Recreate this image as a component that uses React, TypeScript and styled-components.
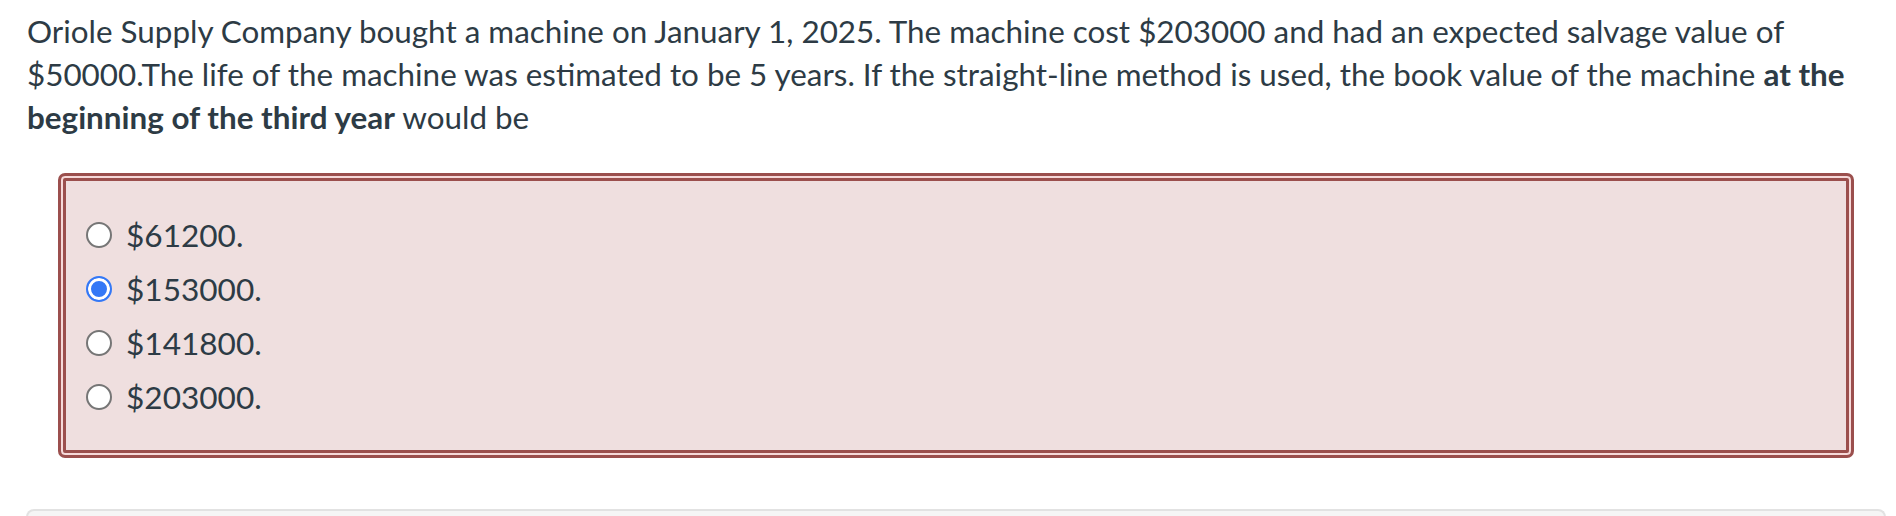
import React from "react";
import styled, { createGlobalStyle } from "styled-components";

const Global = createGlobalStyle`
  html, body { margin: 0; padding: 0; background: #ffffff; }
  body { font-family: Lato, "Noto Sans", sans-serif; color: #2d3b45; }
`;

const Page = styled.div`
  padding: 10px 10px 0 26px;
`;

const Question = styled.p`
  margin: 0;
  font-size: 31.4px;
  line-height: 43px;
  color: #2d3b45;
  padding-left: 1px;
  b { font-weight: 700; }
`;

const AnswerBox = styled.div`
  margin: 34px 32px 0 32px;
  background: #efdfdf;
  border: 3px solid #9b4f4d;
  border-radius: 7px;
  box-shadow: inset 0 0 0 2px #f6d9d9, inset 0 0 0 5px #9b4f4d;
  padding: 32px 32px 31px 25px;
`;

const Option = styled.label`
  display: flex;
  align-items: center;
  height: 54px;
  gap: 14px;
  font-size: 31.6px;
  color: #2d3b45;
`;

const Radio = styled.span<{ $checked?: boolean }>`
  box-sizing: border-box;
  width: 26px;
  height: 26px;
  border-radius: 50%;
  flex: none;
  background: ${(p) => (p.$checked ? "#3478f6" : "#ffffff")};
  border: ${(p) => (p.$checked ? "2px solid #3478f6" : "2px solid #767676")};
  box-shadow: ${(p) => (p.$checked ? "inset 0 0 0 3px #ffffff" : "none")};
`;

const Next = styled.div`
  margin-top: 51px;
  height: 40px;
  border: 2px solid #e2e2e2;
  border-bottom: none;
  border-radius: 8px 8px 0 0;
  background: #f5f5f5;
`;

const options = [
  { label: "$61200.", checked: false },
  { label: "$153000.", checked: true },
  { label: "$141800.", checked: false },
  { label: "$203000.", checked: false },
];

export default function App() {
  return (
    <Page>
      <Global />
      <Question>
        Oriole Supply Company bought a machine on January 1, 2025. The machine cost $203000 and had an expected salvage value of
        $50000.The life of the machine was estimated to be 5 years. If the straight-line method is used, the book value of the machine{" "}
        <b>at the beginning of the third year</b> would be
      </Question>
      <AnswerBox>
        {options.map((o) => (
          <Option key={o.label}>
            <Radio $checked={o.checked} />
            {o.label}
          </Option>
        ))}
      </AnswerBox>
      <Next />
    </Page>
  );
}
